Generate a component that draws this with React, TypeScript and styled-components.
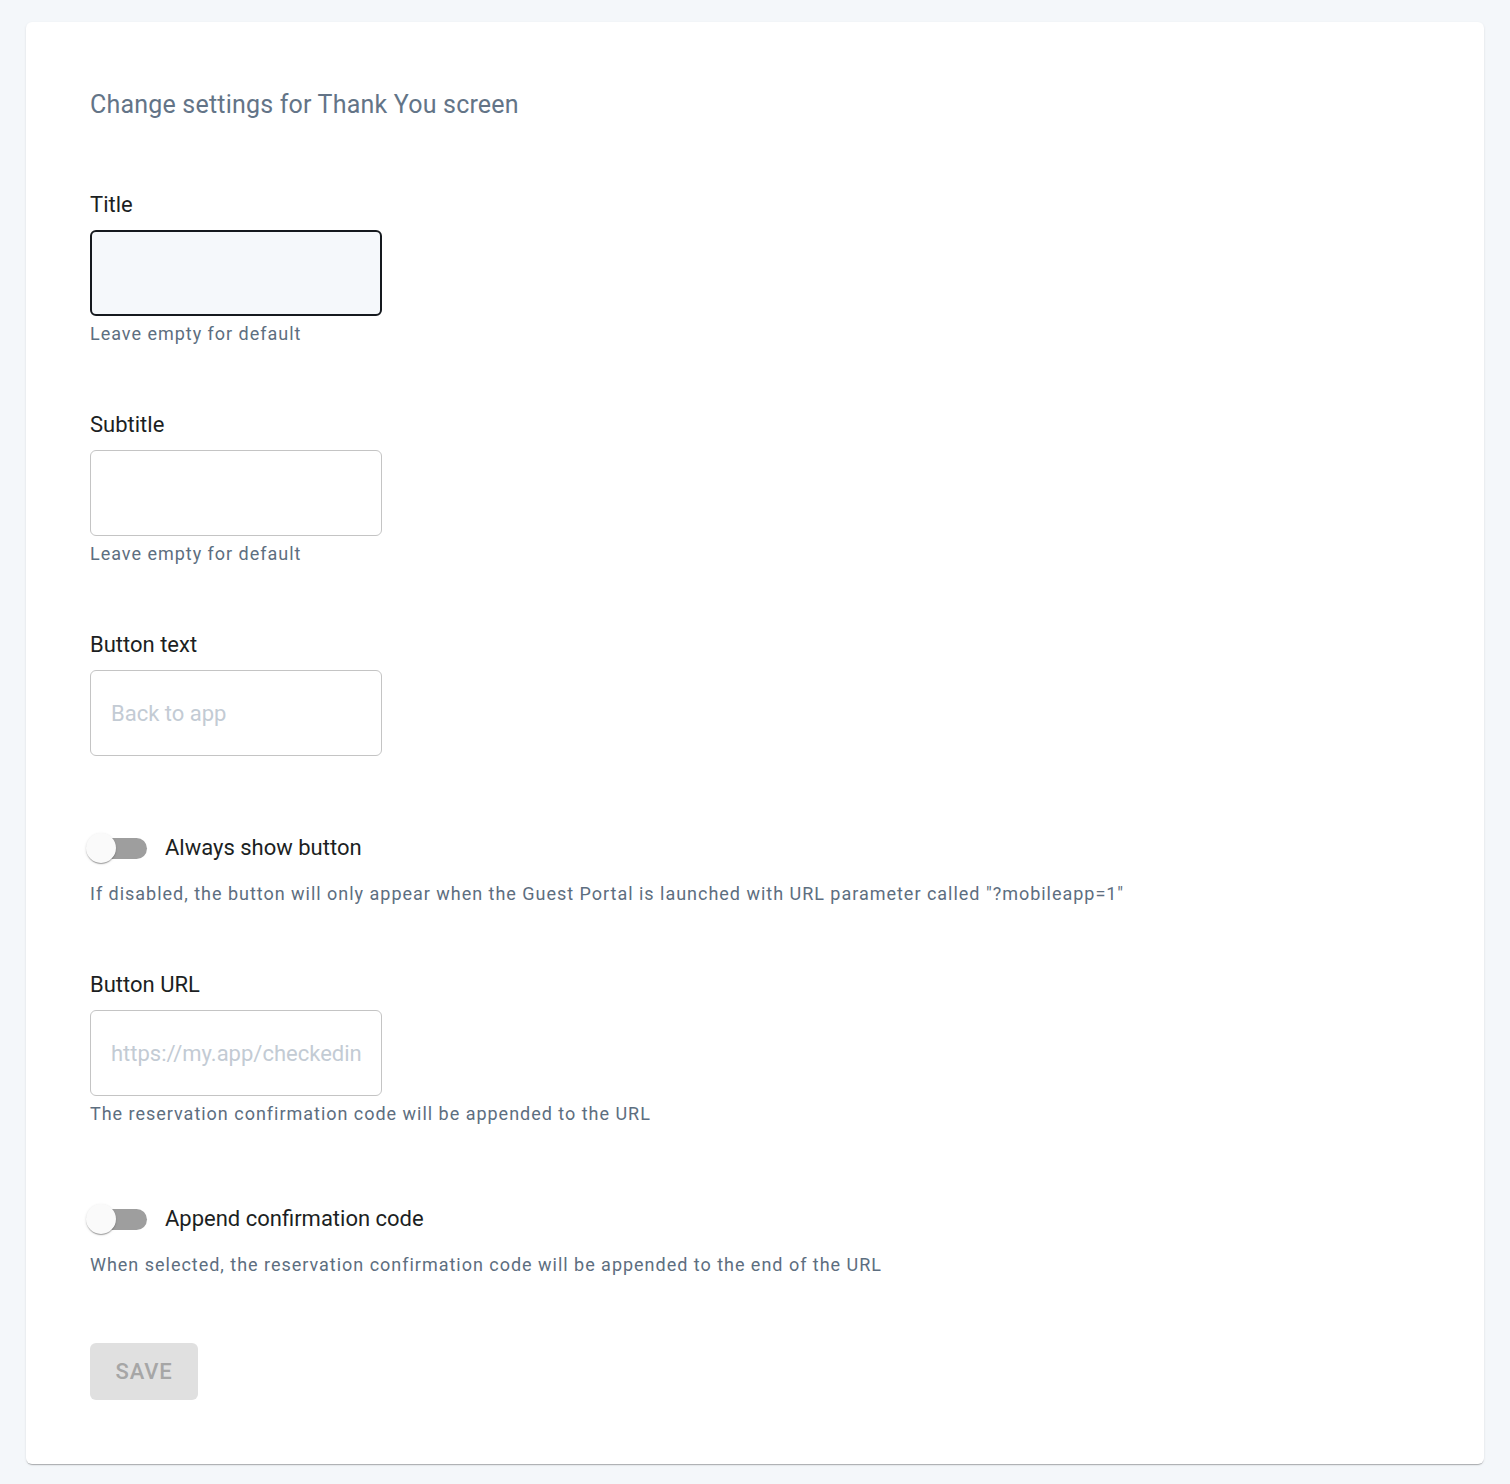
import React from "react";
import styled, { createGlobalStyle } from "styled-components";

const GlobalStyle = createGlobalStyle`
    html, body {
        margin: 0;
        padding: 0;
        background: #f4f7fa;
        font-family: Roboto, "Noto Sans", Arial, sans-serif;
    }
    * {
        box-sizing: border-box;
    }
`;

const Page = styled.div`
    padding: 22px 26px 20px 26px;
    min-height: 1484px;
`;

const Card = styled.section`
    background: #ffffff;
    border-radius: 6px;
    box-shadow: 0px 2px 1px -1px rgba(0, 0, 0, 0.2), 0px 1px 1px 0px rgba(0, 0, 0, 0.08),
        0px 1px 3px 0px rgba(0, 0, 0, 0.08);
    padding: 65px 64px 64px 64px;
    display: flex;
    flex-direction: column;
    align-items: flex-start;
`;

const Heading = styled.h2`
    margin: 0;
    font-size: 25px;
    line-height: 36px;
    font-weight: 400;
    letter-spacing: 0.2px;
    color: #637487;
`;

const Field = styled.div<{ $gap?: number }>`
    margin-top: ${({ $gap }) => $gap ?? 64}px;
    display: flex;
    flex-direction: column;
    align-items: flex-start;
`;

const Label = styled.label`
    font-size: 22px;
    line-height: 30px;
    color: #1c1f23;
    margin-bottom: 10px;
`;

const Input = styled.input<{ $focused?: boolean }>`
    width: 292px;
    height: 86px;
    border-radius: 6px;
    border: ${({ $focused }) => ($focused ? "2px solid #15191e" : "1.5px solid #c4c4c4")};
    background: ${({ $focused }) => ($focused ? "#f5f8fb" : "#ffffff")};
    padding: 0 20px;
    font-family: Roboto, "Noto Sans", Arial, sans-serif;
    font-size: 22px;
    color: #1c1f23;
    outline: none;
    &::placeholder {
        color: #c3cbd4;
    }
`;

const Helper = styled.p`
    margin: 6px 0 0 0;
    font-size: 18px;
    line-height: 24px;
    letter-spacing: 0.98px;
    color: #5d6e80;
`;

const ToggleRow = styled.label`
    display: flex;
    align-items: center;
    height: 57px;
    margin-left: -4px;
    cursor: pointer;
`;

const Switch = styled.span`
    position: relative;
    display: inline-block;
    width: 61px;
    height: 30px;
    flex: none;
`;

const Track = styled.span`
    position: absolute;
    left: 10px;
    top: 5px;
    width: 51px;
    height: 21px;
    border-radius: 11px;
    background: #9e9e9e;
`;

const Thumb = styled.span`
    position: absolute;
    left: 0;
    top: 0;
    width: 30px;
    height: 30px;
    border-radius: 50%;
    background: #fafafa;
    box-shadow: 0px 2px 1px -1px rgba(0, 0, 0, 0.2), 0px 1px 1px 0px rgba(0, 0, 0, 0.14),
        0px 1px 3px 0px rgba(0, 0, 0, 0.12);
`;

const ToggleText = styled.span`
    margin-left: 18px;
    font-size: 22px;
    color: #1c1f23;
`;

const SaveButton = styled.button`
    margin-top: 66px;
    width: 108px;
    height: 57px;
    border: none;
    border-radius: 6px;
    background: #e0e0e0;
    color: #a6a6a6;
    font-family: Roboto, "Noto Sans", Arial, sans-serif;
    font-size: 22px;
    font-weight: 500;
    letter-spacing: 0.8px;
    text-transform: uppercase;
`;

type TToggleProps = { label: string };

const Toggle = ({ label }: TToggleProps) => (
    <ToggleRow>
        <Switch>
            <Track />
            <Thumb />
        </Switch>
        <ToggleText>{label}</ToggleText>
    </ToggleRow>
);

export default function App() {
    return (
        <Page>
            <GlobalStyle />
            <Card>
                <Heading>Change settings for Thank You screen</Heading>

                <Field $gap={67}>
                    <Label>Title</Label>
                    <Input $focused />
                    <Helper>Leave empty for default</Helper>
                </Field>

                <Field>
                    <Label>Subtitle</Label>
                    <Input />
                    <Helper>Leave empty for default</Helper>
                </Field>

                <Field>
                    <Label>Button text</Label>
                    <Input placeholder="Back to app" />
                </Field>

                <Field $gap={63}>
                    <Toggle label="Always show button" />
                    <Helper>
                        If disabled, the button will only appear when the Guest Portal is launched with URL
                        parameter called "?mobileapp=1"
                    </Helper>
                </Field>

                <Field>
                    <Label>Button URL</Label>
                    <Input placeholder="https://my.app/checkedin" />
                    <Helper>The reservation confirmation code will be appended to the URL</Helper>
                </Field>

                <Field>
                    <Toggle label="Append confirmation code" />
                    <Helper>
                        When selected, the reservation confirmation code will be appended to the end of the URL
                    </Helper>
                </Field>

                <SaveButton disabled>Save</SaveButton>
            </Card>
        </Page>
    );
}
